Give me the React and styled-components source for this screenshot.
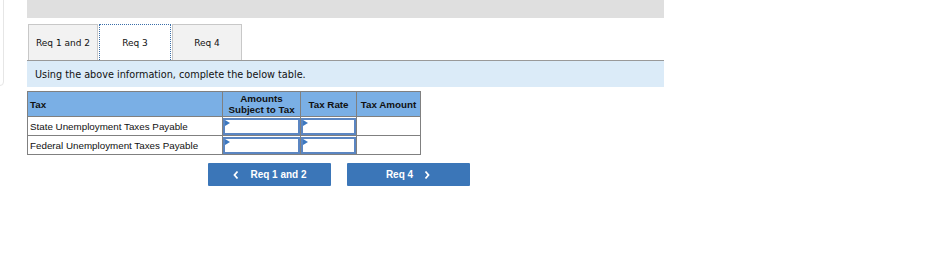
import styled, { createGlobalStyle } from "styled-components";

const GlobalStyle = createGlobalStyle`
    body {
        margin: 0;
        background: #fff;
        font-family: "DejaVu Sans", Verdana, sans-serif;
    }
`

const rows = [
    "State Unemployment Taxes Payable",
    "Federal Unemployment Taxes Payable",
]

const App = () => {
    return <>
    <GlobalStyle />
    <Page>
        <SidePanel />
        <Main>
            <TopBar />
            <Tabs>
                <Tab>Req 1 and 2</Tab>
                <Tab $active>Req 3</Tab>
                <Tab>Req 4</Tab>
            </Tabs>
            <Instruction>Using the above information, complete the below table.</Instruction>
            <Table>
                <colgroup>
                    <col style={{width: "195px"}} />
                    <col style={{width: "78px"}} />
                    <col style={{width: "56px"}} />
                    <col style={{width: "64px"}} />
                </colgroup>
                <thead>
                    <tr>
                        <HeadCell $left>Tax</HeadCell>
                        <HeadCell>Amounts<br />Subject to Tax</HeadCell>
                        <HeadCell>Tax Rate</HeadCell>
                        <HeadCell>Tax Amount</HeadCell>
                    </tr>
                </thead>
                <tbody>
                    {rows.map(label => (
                        <tr key={label}>
                            <LabelCell>{label}</LabelCell>
                            <Cell><InputBox /></Cell>
                            <Cell><InputBox /></Cell>
                            <Cell />
                        </tr>
                    ))}
                </tbody>
            </Table>
            <NavRow>
                <NavButton>
                    <Chevron viewBox="0 0 8 10"><path d="M5.5 1.5 L2.5 5 L5.5 8.5" /></Chevron>
                    Req 1 and 2
                </NavButton>
                <NavButton>
                    Req 4
                    <Chevron viewBox="0 0 8 10"><path d="M2.5 1.5 L5.5 5 L2.5 8.5" /></Chevron>
                </NavButton>
            </NavRow>
        </Main>
    </Page>
    </>
}

export default App

const Page = styled.div`
    display: flex;
    position: relative;
    width: 936px;
    height: 267px;
    overflow: hidden;
`

const SidePanel = styled.div`
    position: absolute;
    left: -20px;
    top: -10px;
    width: 22px;
    height: 94px;
    border: 1px solid #e6e6e6;
    border-radius: 4px;
`

const Main = styled.div`
    display: flex;
    flex-direction: column;
    margin-left: 27px;
    width: 637px;
`

const TopBar = styled.div`
    height: 18px;
    background: #dfdfdf;
`

const Tabs = styled.div`
    display: flex;
    gap: 1px;
    margin-top: 6px;
    padding-left: 1px;
`

const Tab = styled.div`
    display: flex;
    align-items: center;
    justify-content: center;
    box-sizing: border-box;
    width: ${p => p.$active ? "72px" : "70px"};
    height: 36px;
    font-size: 9px;
    color: #111;
    background: ${p => p.$active ? "#fff" : "#f2f2f2"};
    border: 1px ${p => p.$active ? "dotted #3a6ea8" : "solid #c8c8c8"};
    border-bottom: none;
    margin-bottom: ${p => p.$active ? "-1px" : "0"};
    position: relative;
    z-index: ${p => p.$active ? 1 : 0};
`

const Instruction = styled.div`
    height: 26px;
    display: flex;
    align-items: center;
    padding-left: 8px;
    font-size: 9.7px;
    color: #111;
    background: #dbebf8;
    border-top: 1px solid #999;
`

const Table = styled.table`
    margin-top: 4px;
    width: 394px;
    table-layout: fixed;
    border-collapse: collapse;
    font-family: "Liberation Sans", Arial, sans-serif;
    font-size: 9.8px;
    color: #111;
    td, th {
        border: 1px solid #808080;
    }
`

const HeadCell = styled.th`
    height: 24px;
    padding: 0 2px;
    background: #7aafe5;
    font-weight: bold;
    line-height: 11px;
    text-align: ${p => p.$left ? "left" : "center"};
    vertical-align: middle;
    white-space: nowrap;
`

const LabelCell = styled.td`
    height: 18px;
    padding: 0 2px;
    text-align: left;
    white-space: nowrap;
`

const Cell = styled.td`
    height: 18px;
    padding: 0;
`

const InputBox = styled.div`
    position: relative;
    box-sizing: border-box;
    height: 17px;
    border: 2px solid #5b86c2;
    background: #fff;
    &::before {
        content: "";
        position: absolute;
        left: 0;
        top: 0;
        border-left: 5px solid #3c78c0;
        border-top: 3px solid transparent;
        border-bottom: 3px solid transparent;
    }
`

const NavRow = styled.div`
    display: flex;
    gap: 16px;
    margin-top: 8px;
    padding-left: 181px;
`

const NavButton = styled.div`
    display: flex;
    align-items: center;
    justify-content: center;
    gap: 10px;
    width: 123px;
    height: 23px;
    background: #3b76b8;
    color: #fff;
    font-family: "Liberation Sans", Arial, sans-serif;
    font-weight: bold;
    font-size: 10px;
    border-radius: 1px;
`

const Chevron = styled.svg`
    width: 8px;
    height: 10px;
    fill: none;
    stroke: #fff;
    stroke-width: 1.8;
`
